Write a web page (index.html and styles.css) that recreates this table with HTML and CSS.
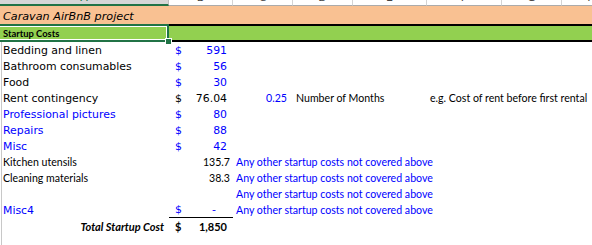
FILE: index.html
```html
<!DOCTYPE html>
<html lang="en">
<head>
<meta charset="utf-8">
<title>Caravan AirBnB project</title>
<link rel="stylesheet" href="styles.css">
</head>
<body>
<div class="sheet">
  <div class="colheads">
    <div class="ch sel"><span>A</span></div>
    <div class="ch"><span>B</span></div>
    <div class="ch"><span>C</span></div>
    <div class="ch"><span>D</span></div>
    <div class="ch"><span>E</span></div>
    <div class="ch"><span>F</span></div>
    <div class="ch"><span>G</span></div>
    <div class="ch"><span>H</span></div>
  </div>

  <div class="row title"><div class="c txt">Caravan AirBnB project</div></div>
  <div class="row section"><div class="c txt selcell">Startup Costs</div></div>

  <div class="row body"><div class="c txt v">Bedding and linen</div><div class="c acct v blue"><span>$</span><span>591</span></div></div>
  <div class="row body"><div class="c txt v">Bathroom consumables</div><div class="c acct v blue"><span>$</span><span>56</span></div></div>
  <div class="row body"><div class="c txt v">Food</div><div class="c acct v blue"><span>$</span><span>30</span></div></div>
  <div class="row body"><div class="c txt v">Rent contingency</div><div class="c acct v"><span>$</span><span>76.04</span></div><div class="c num k blue pad5">0.25</div><div class="c txt k">Number of Months</div><div class="c"></div><div class="c txt k">e.g. Cost of rent before first rental</div></div>
  <div class="row body"><div class="c txt v blue">Professional pictures</div><div class="c acct v blue"><span>$</span><span>80</span></div></div>
  <div class="row body"><div class="c txt v blue">Repairs</div><div class="c acct v blue"><span>$</span><span>88</span></div></div>
  <div class="row body"><div class="c txt v blue">Misc</div><div class="c acct v blue"><span>$</span><span>42</span></div></div>
  <div class="row body"><div class="c txt k">Kitchen utensils</div><div class="c num k">135.7</div><div class="c txt k blue">Any other startup costs not covered above</div></div>
  <div class="row body"><div class="c txt k">Cleaning materials</div><div class="c num k">38.3</div><div class="c txt k blue">Any other startup costs not covered above</div></div>
  <div class="row body"><div class="c"></div><div class="c"></div><div class="c txt k blue">Any other startup costs not covered above</div></div>
  <div class="row body"><div class="c txt v blue">Misc4</div><div class="c acct v blue under"><span>$</span><span class="dash">-</span></div><div class="c txt k blue">Any other startup costs not covered above</div></div>
  <div class="row body"><div class="c txt k total">Total Startup Cost</div><div class="c acct k bold"><span>$</span><span>1,850</span></div></div>
  <div class="row body tail"></div>
</div>
</body>
</html>
```

FILE: styles.css
```css
html, body {
  margin: 0;
  padding: 0;
  background: #ffffff;
}

.sheet {
  width: 592px;
  height: 245px;
  overflow: hidden;
  font-family: "DejaVu Sans", Verdana, sans-serif;
  font-size: 11px;
  color: #000;
}

.colheads,
.row {
  display: grid;
  grid-template-columns: 169px 64px 60px 60px 74px 75px 60px 60px;
  white-space: nowrap;
}

.colheads {
  height: 6px;
  overflow: hidden;
}

.ch {
  box-sizing: border-box;
  height: 6px;
  border-right: 1px solid #d4d4d4;
  border-bottom: 1px solid #ababab;
  background: #ffffff;
  overflow: hidden;
  text-align: center;
}

.ch span {
  display: block;
  font-family: "DejaVu Sans", sans-serif;
  font-size: 11px;
  line-height: 11px;
  margin-top: -8px;
  color: #444;
}

.ch.sel {
  background: #d6d6d6;
  border-bottom: 2px solid #217346;
  border-right-color: #bdbdbd;
}

.ch.sel span {
  color: #217346;
}

.row {
  height: 16px;
  align-items: center;
}

.row.body {
  background: linear-gradient(to right, transparent 1px, #c8c8c8 1px, #c8c8c8 2px, transparent 2px);
}

.row.tail {
  height: 11px;
}

.c {
  min-width: 0;
  overflow: visible;
}

.txt {
  padding-left: 3px;
}

.row.title {
  height: 18px;
  align-items: end;
  background: #f9c192;
  font-style: italic;
  font-size: 11.2px;
}

.row.title .txt {
  line-height: 15px;
}

.row.section {
  height: 14px;
  background: #92d050;
  border-top: 2px solid #000;
  border-bottom: 2px solid #000;
  font-family: Lato, "Open Sans", sans-serif;
  font-weight: bold;
  font-size: 9.4px;
}

.selcell {
  position: relative;
  height: 14px;
  line-height: 15px;
}

.selcell::after {
  content: "";
  position: absolute;
  left: -3px;
  top: -2px;
  bottom: -2px;
  right: 0;
  border: 2px solid #217346;
  box-shadow: inset 0 0 0 1px #ffffff;
}

.selcell::before {
  content: "";
  position: absolute;
  right: -3px;
  top: 12px;
  width: 5px;
  height: 5px;
  background: #217346;
  border: 1px solid #ffffff;
  z-index: 2;
}

.v {
  font-family: "DejaVu Sans", Verdana, sans-serif;
  font-size: 10.9px;
}

.k {
  font-family: Lato, "Open Sans", sans-serif;
  font-size: 10.6px;
}

.blue {
  color: #0000ff;
}

.acct {
  display: flex;
  justify-content: space-between;
  padding: 0 6px 0 6px;
}

.num {
  text-align: right;
  padding-right: 3px;
}

.pad5 {
  padding-right: 6px;
}

.dash {
  padding-right: 11px;
}

.under {
  align-self: stretch;
  align-items: center;
  border-bottom: 1px solid #000;
}

.total {
  text-align: right;
  padding-right: 5px;
  font-weight: bold;
  font-style: italic;
  font-size: 11px;
}

.bold {
  font-weight: bold;
  font-size: 11px;
}
```
